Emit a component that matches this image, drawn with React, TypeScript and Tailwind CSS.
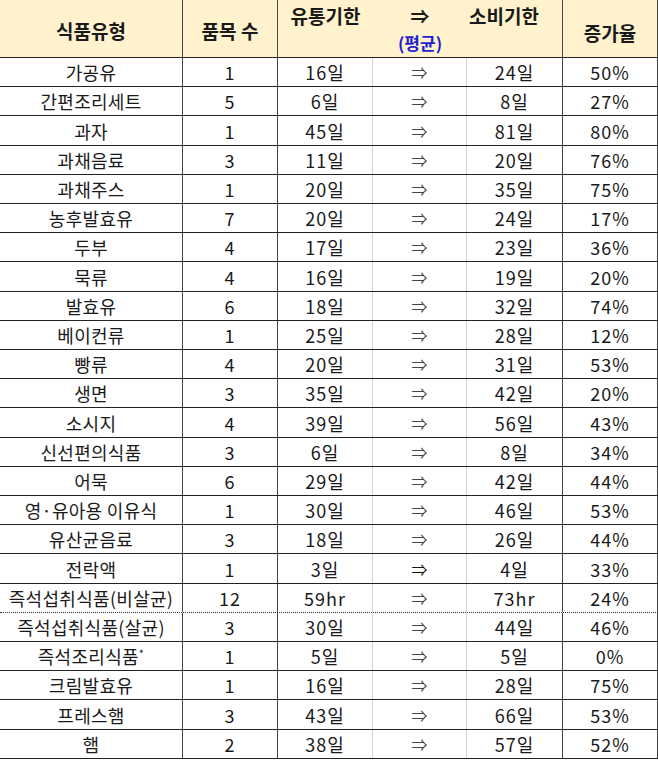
import React from "react";

type Row = {
  name: React.ReactNode;
  count: string;
  before: string;
  after: string;
  rate: string;
  dotted?: boolean;
  boldArrow?: boolean;
};

const rows: Row[] = [
  { name: "가공유", count: "1", before: "16일", after: "24일", rate: "50%" },
  { name: "간편조리세트", count: "5", before: "6일", after: "8일", rate: "27%" },
  { name: "과자", count: "1", before: "45일", after: "81일", rate: "80%" },
  { name: "과채음료", count: "3", before: "11일", after: "20일", rate: "76%" },
  { name: "과채주스", count: "1", before: "20일", after: "35일", rate: "75%" },
  { name: "농후발효유", count: "7", before: "20일", after: "24일", rate: "17%" },
  { name: "두부", count: "4", before: "17일", after: "23일", rate: "36%" },
  { name: "묵류", count: "4", before: "16일", after: "19일", rate: "20%" },
  { name: "발효유", count: "6", before: "18일", after: "32일", rate: "74%" },
  { name: "베이컨류", count: "1", before: "25일", after: "28일", rate: "12%" },
  { name: "빵류", count: "4", before: "20일", after: "31일", rate: "53%" },
  { name: "생면", count: "3", before: "35일", after: "42일", rate: "20%" },
  { name: "소시지", count: "4", before: "39일", after: "56일", rate: "43%" },
  { name: "신선편의식품", count: "3", before: "6일", after: "8일", rate: "34%" },
  { name: "어묵", count: "6", before: "29일", after: "42일", rate: "44%" },
  { name: "영·유아용 이유식", count: "1", before: "30일", after: "46일", rate: "53%" },
  { name: "유산균음료", count: "3", before: "18일", after: "26일", rate: "44%" },
  { name: "전락액", count: "1", before: "3일", after: "4일", rate: "33%", boldArrow: true },
  { name: "즉석섭취식품(비살균)", count: "12", before: "59hr", after: "73hr", rate: "24%", dotted: true },
  { name: "즉석섭취식품(살균)", count: "3", before: "30일", after: "44일", rate: "46%" },
  {
    name: (
      <>
        즉석조리식품<sup className="text-[11px] relative -top-[3px]">*</sup>
      </>
    ),
    count: "1",
    before: "5일",
    after: "5일",
    rate: "0%",
  },
  { name: "크림발효유", count: "1", before: "16일", after: "28일", rate: "75%" },
  { name: "프레스햄", count: "3", before: "43일", after: "66일", rate: "53%" },
  { name: "햄", count: "2", before: "38일", after: "57일", rate: "52%" },
];

const font = { fontFamily: '"Malgun Gothic", "Noto Sans CJK KR", "Noto Sans", sans-serif' };

export default function App() {
  return (
    <div className="w-[658px] h-[760px] bg-white text-[#1a1a1a] overflow-hidden" style={font}>
      {/* Header */}
      <div className="grid grid-cols-[183px_95px_95px_94px_96px_95px] h-[58px] bg-[#fff2cc] border-b border-[#222] font-bold text-[19px] leading-none">
        <div className="flex items-center justify-center border-r border-[#444] pt-[2px]">
          식품유형
        </div>
        <div className="flex items-center justify-center border-r border-[#444] pt-[2px]">
          품목 수
        </div>
        <div className="col-span-3 grid grid-cols-[95px_94px_96px] grid-rows-[30px_28px] border-r border-[#444]">
          <div className="flex items-end justify-center pb-[5px]">유통기한</div>
          <div className="flex items-end justify-center pb-[5px]">⇒</div>
          <div className="flex items-end justify-center pb-[5px] pr-[22px]">소비기한</div>
          <div />
          <div className="flex items-start justify-center text-[#1f1fd0] text-[17px] pt-[4px]">(평균)</div>
          <div />
        </div>
        <div className="flex items-center justify-center border-r border-[#444] pt-[6px]">
          증가율
        </div>
      </div>

      {/* Body */}
      {rows.map((r, i) => (
        <div
          key={i}
          className={`grid grid-cols-[183px_95px_95px_94px_96px_95px] text-[18px] leading-none ${
            i % 5 === 2 ? "h-[30px]" : "h-[29px]"
          } ${r.dotted ? "border-b border-dotted border-[#333]" : "border-b border-[#222]"}`}
        >
          <div className="flex items-center justify-center border-r border-[#444] whitespace-nowrap tracking-[0.3px]">
            {r.name}
          </div>
          <div className="flex items-center justify-center border-r border-[#444] tracking-[1px]">{r.count}</div>
          <div className="flex items-center justify-center border-r border-[#d4d4d4] tracking-[1px]">
            {r.before}
          </div>
          <div
            className={`flex items-center justify-center border-r border-[#d4d4d4] text-[16px] ${
              r.boldArrow ? "text-[#111]" : "text-[#444]"
            }`}
          >
            ⇒
          </div>
          <div className="flex items-center justify-center border-r border-[#444] tracking-[1px]">
            {r.after}
          </div>
          <div className="flex items-center justify-center border-r border-[#444] tracking-[1px]">
            {r.rate}
          </div>
        </div>
      ))}
    </div>
  );
}
